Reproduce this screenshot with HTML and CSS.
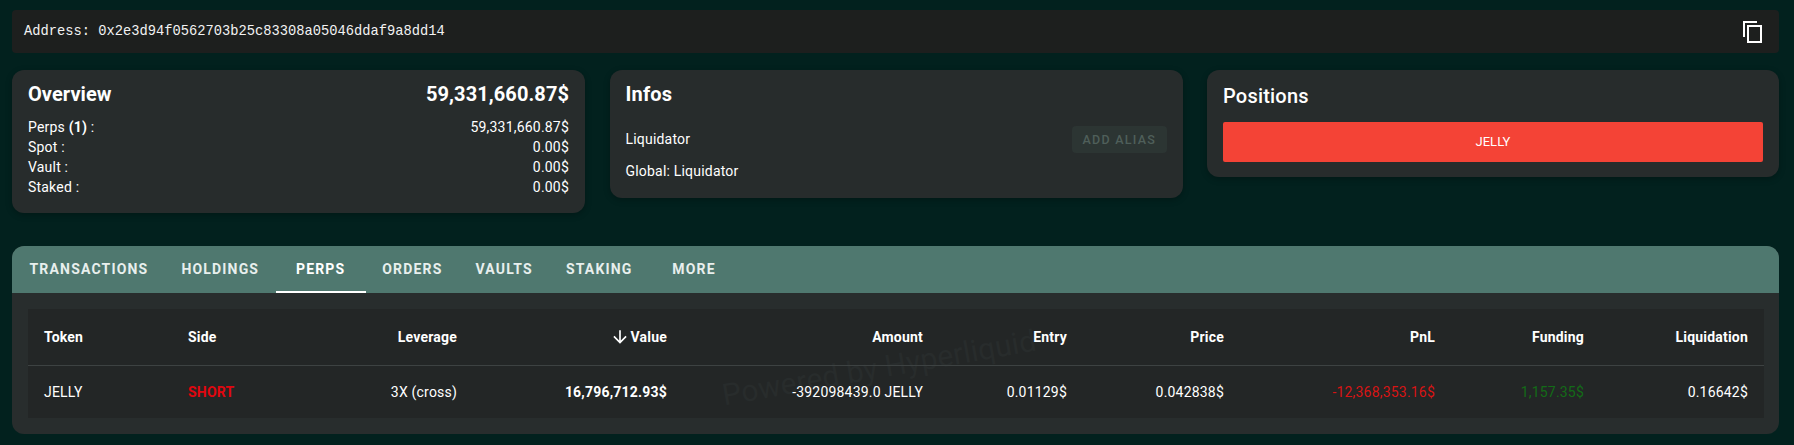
FILE: index.html
```html
<!DOCTYPE html>
<html>
<head>
  <meta charset="UTF-8">
  <link rel="stylesheet" href="styles.css">
</head>
<body>
  <div class="address-bar">
    <span class="address">Address: 0x2e3d94f0562703b25c83308a05046ddaf9a8dd14</span>
    <svg class="copy-icon" viewBox="0 0 24 24"><path d="M16 1H2v16h2V3h12V1zm5 4H6v18h15V5zm-2 16H8V7h11v14z"/></svg>
  </div>

  <div class="cards">
    <div class="card">
      <div class="overview-head">
        <span>Overview</span>
        <span>59,331,660.87$</span>
      </div>
      <div class="overview-row"><span>Perps <b>(1)</b> :</span><span>59,331,660.87$</span></div>
      <div class="overview-row"><span>Spot :</span><span>0.00$</span></div>
      <div class="overview-row"><span>Vault :</span><span>0.00$</span></div>
      <div class="overview-row"><span>Staked :</span><span>0.00$</span></div>
    </div>

    <div class="card card-infos">
      <div class="card-title">Infos</div>
      <div class="info-row">
        <span>Liquidator</span>
        <button class="alias-btn" disabled>Add alias</button>
      </div>
      <div class="info-global">Global: Liquidator</div>
    </div>

    <div class="card card-positions">
      <div class="positions-title">Positions</div>
      <button class="position-btn">JELLY</button>
    </div>
  </div>

  <div class="tabs-panel">
    <div class="tabs">
      <div class="tab">Transactions</div>
      <div class="tab">Holdings</div>
      <div class="tab active">Perps</div>
      <div class="tab">Orders</div>
      <div class="tab">Vaults</div>
      <div class="tab">Staking</div>
      <div class="tab">More</div>
    </div>
    <div class="panel">
      <div class="table-wrap">
        <div class="watermark">Powered by Hyperliquid</div>
        <table class="perps">
          <colgroup>
            <col class="c-token"><col class="c-side"><col class="c-lev"><col class="c-value"><col class="c-amount">
            <col class="c-entry"><col class="c-price"><col class="c-pnl"><col class="c-funding"><col class="c-liq">
          </colgroup>
          <thead>
            <tr>
              <th class="left">Token</th>
              <th class="left">Side</th>
              <th>Leverage</th>
              <th><svg class="sort-icon" viewBox="0 0 24 24"><path d="M20 12l-1.41-1.41L13 16.17V4h-2v12.17l-5.58-5.59L4 12l8 8 8-8z"/></svg>Value</th>
              <th>Amount</th>
              <th>Entry</th>
              <th>Price</th>
              <th>PnL</th>
              <th>Funding</th>
              <th>Liquidation</th>
            </tr>
          </thead>
          <tbody>
            <tr>
              <td class="left">JELLY</td>
              <td class="left short">SHORT</td>
              <td>3X (cross)</td>
              <td class="strong">16,796,712.93$</td>
              <td>-392098439.0 JELLY</td>
              <td>0.01129$</td>
              <td>0.042838$</td>
              <td class="loss">-12,368,353.16$</td>
              <td class="gain">1,157.35$</td>
              <td>0.16642$</td>
            </tr>
          </tbody>
        </table>
      </div>
    </div>
  </div>
</body>
</html>
```

FILE: styles.css
```css
html, body {
  height: 100%;
}
body {
  margin: 0;
  padding: 10px 15px 0 12px;
  box-sizing: border-box;
  overflow: hidden;
  background-color: #02211e;
  color: #fff;
  font-family: Roboto, 'Noto Sans', sans-serif;
  font-size: 14px;
  letter-spacing: 0.2px;
}

.address-bar {
  display: flex;
  align-items: center;
  justify-content: space-between;
  height: 43px;
  padding: 0 14px 0 12px;
  background-color: #1d1f1e;
  border-radius: 4px;
}
.address {
  font-family: 'Liberation Mono', monospace;
  font-size: 13.75px;
  letter-spacing: 0;
  color: #f2f2f2;
}
.copy-icon {
  width: 24px;
  height: 24px;
  fill: #fff;
}

.cards {
  display: grid;
  grid-template-columns: 573px 573px 572px;
  column-gap: 24.5px;
  align-items: start;
  margin-top: 17px;
}
.card {
  padding: 12px 16px 16px;
  background-color: #272c2c;
  border-radius: 12px;
  box-shadow: 0 2px 6px rgba(0, 0, 0, 0.25);
}
.card-infos {
  padding-bottom: 17px;
}
.card-positions {
  padding-bottom: 15px;
}
.overview-head {
  display: flex;
  justify-content: space-between;
  font-size: 20px;
  font-weight: 700;
  letter-spacing: 0.08px;
  line-height: 24px;
  margin-bottom: 11px;
}
.overview-row {
  display: flex;
  justify-content: space-between;
  line-height: 20px;
}
.card-title {
  font-size: 20px;
  font-weight: 700;
  line-height: 24px;
}
.positions-title {
  margin-top: 2px;
  font-size: 20px;
  font-weight: 500;
  line-height: 24px;
}
.info-row {
  display: flex;
  align-items: center;
  justify-content: space-between;
  margin-top: 19px;
  height: 28px;
}
.info-global {
  margin-top: 8px;
  line-height: 20px;
}
.alias-btn {
  height: 27px;
  padding: 0 10.5px;
  border: 0;
  border-radius: 4px;
  background-color: #2c3533;
  color: #4f5f5a;
  font-family: inherit;
  font-size: 12.5px;
  font-weight: 500;
  letter-spacing: 1.25px;
  text-transform: uppercase;
}
.position-btn {
  display: block;
  width: 100%;
  height: 40px;
  margin-top: 14px;
  padding: 0 0 2px;
  border: 0;
  border-radius: 2px;
  background-color: #f44336;
  color: #fff;
  font-family: inherit;
  font-size: 13px;
}

.tabs-panel {
  position: absolute;
  top: 246px;
  left: 12px;
  width: 1767px;
  border-radius: 12px;
  overflow: hidden;
  background-color: #282d2d;
}
.tabs {
  display: flex;
  height: 47px;
  padding-left: 1px;
  background-color: #4f786f;
}
.tab {
  min-width: 90px;
  box-sizing: border-box;
  padding: 0 16.5px;
  line-height: 47px;
  text-align: center;
  font-weight: 700;
  letter-spacing: 1.18px;
  text-transform: uppercase;
  color: #e8efed;
}
.tab.active {
  color: #fff;
  border-bottom: 2px solid #fff;
}

.panel {
  padding: 16px 15px 16px 16px;
}
.table-wrap {
  position: relative;
  background-color: #232626;
}
.perps {
  position: relative;
  width: 1736px;
  table-layout: fixed;
  border-collapse: collapse;
}
.c-token { width: 144px; }
.c-side { width: 130px; }
.c-lev { width: 171px; }
.c-value { width: 210px; }
.c-amount { width: 256px; }
.c-entry { width: 144px; }
.c-price { width: 157px; }
.c-pnl { width: 211px; }
.c-funding { width: 149px; }
.c-liq { width: 164px; }
.perps th, .perps td {
  padding: 16px;
  text-align: right;
  line-height: 20px;
}
.perps th {
  height: 24px;
  font-weight: 700;
  border-bottom: 1px solid #3d4242;
}
.perps .left {
  text-align: left;
}
.sort-icon {
  width: 20px;
  height: 20px;
  fill: #fff;
  vertical-align: -5px;
  margin-right: 1px;
}
.short {
  color: #e0060f;
  font-weight: 700;
}
.strong {
  font-weight: 700;
}
.loss {
  color: #d81414;
}
.gain {
  color: #136b17;
}
.watermark {
  position: absolute;
  top: 41px;
  left: 692px;
  font-size: 30px;
  color: #282c2c;
  white-space: nowrap;
  transform: rotate(-10deg);
}
```
